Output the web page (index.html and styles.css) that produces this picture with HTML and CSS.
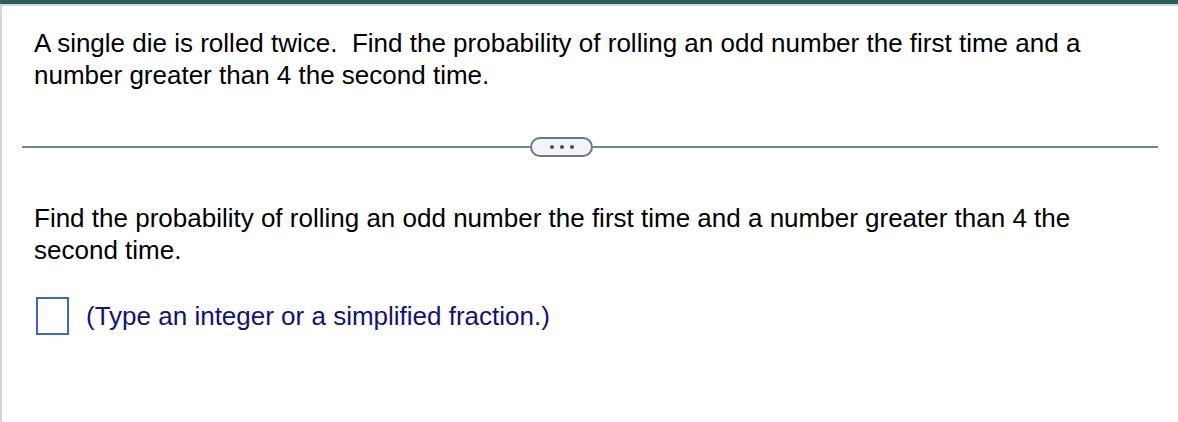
FILE: index.html
```html
<!DOCTYPE html>
<html>
<head>
<meta charset="utf-8">
<link rel="stylesheet" href="styles.css">
</head>
<body>
<div class="topbar"></div>
<div class="frame">
  <p class="question">A single die is rolled twice.&nbsp; Find the probability of rolling an odd number the first time and a number greater than 4 the second time.</p>
  <div class="divider">
    <span class="line line-left"></span>
    <span class="pill"><i></i><i></i><i></i></span>
    <span class="line"></span>
  </div>
  <p class="prompt">Find the probability of rolling an odd number the first time and a number greater than 4 the second time.</p>
  <div class="answer">
    <span class="box"></span>
    <span class="hint">(Type an integer or a simplified fraction.)</span>
  </div>
</div>
</body>
</html>
```
FILE: styles.css
```css
html, body {
  margin: 0;
  padding: 0;
  background: #ffffff;
}
body {
  width: 1178px;
  height: 422px;
  overflow: hidden;
  font-family: "Liberation Sans", Arial, sans-serif;
  color: #000;
}
.topbar {
  height: 4px;
  background: #2b5f59;
  border-bottom: 2px solid #d3d4e2;
}
.frame {
  border-left: 2px solid #d3d4e2;
  height: 416px;
  box-sizing: border-box;
  padding-left: 32px;
  padding-right: 20px;
}
.question {
  margin: 0;
  padding-top: 21px;
  font-size: 26px;
  line-height: 32px;
}
.divider {
  display: flex;
  align-items: center;
  margin-top: 46px;
  margin-left: -12px;
  width: 1136px;
}
.line {
  flex: 1;
  height: 2px;
  background: #7b8391;
}
.line-left {
  flex: 0 0 508px;
}
.pill {
  display: flex;
  align-items: center;
  justify-content: center;
  gap: 6px;
  width: 59px;
  height: 16px;
  border: 2px solid #6e7685;
  border-radius: 10px;
  background: #f3f4f6;
}
.pill i {
  display: block;
  width: 4px;
  height: 4px;
  border-radius: 50%;
  background: #4a4f58;
}
.prompt {
  margin: 0;
  margin-top: 45px;
  font-size: 26px;
  line-height: 32px;
}
.answer {
  display: flex;
  align-items: center;
  margin-top: 31px;
  margin-left: 2px;
}
.box {
  width: 29px;
  height: 34px;
  border: 2px solid #3e66c9;
}
.hint {
  margin-left: 17px;
  font-size: 26px;
  color: #111180;
}
```
